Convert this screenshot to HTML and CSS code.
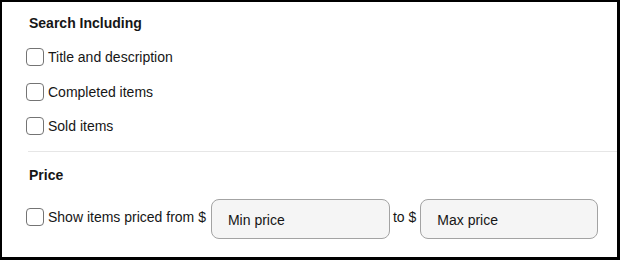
FILE: index.html
```html
<!DOCTYPE html>
<html>
<head>
<meta charset="utf-8">
<link rel="stylesheet" href="styles.css">
</head>
<body>
<div class="frame">
  <section class="group">
    <h3 class="heading">Search Including</h3>
    <label class="row"><input type="checkbox" class="box"><span class="label">Title and description</span></label>
    <label class="row"><input type="checkbox" class="box"><span class="label">Completed items</span></label>
    <label class="row"><input type="checkbox" class="box"><span class="label">Sold items</span></label>
  </section>
  <hr class="divider">
  <section class="group">
    <h3 class="heading heading-price">Price</h3>
    <div class="price-row">
      <label class="price-check"><input type="checkbox" class="box"><span class="label">Show items priced from $</span></label>
      <input type="text" class="field" placeholder="Min price">
      <span class="label to">to $</span>
      <input type="text" class="field field-max" placeholder="Max price">
    </div>
  </section>
</div>
</body>
</html>
```
FILE: styles.css
```css
html, body {
  margin: 0;
  padding: 0;
  background: #fff;
}
.frame {
  width: 620px;
  height: 260px;
  box-sizing: border-box;
  border: 2px solid #000;
  border-right-width: 3px;
  border-bottom-width: 3px;
  padding: 13px 0 0 24px;
  font-family: "Liberation Sans", Arial, sans-serif;
  color: #161616;
  background: #fff;
}
.heading {
  margin: 0 0 0 3px;
  font-size: 14px;
  line-height: 16px;
  font-weight: bold;
}
.group .heading + .row {
  margin-top: 9px;
}
.row {
  display: flex;
  align-items: center;
  height: 34px;
}
.row + .row {
  margin-top: 0.5px;
}
.box {
  appearance: none;
  -webkit-appearance: none;
  margin: 0;
  width: 18px;
  height: 18px;
  box-sizing: border-box;
  border: 1px solid #747474;
  border-radius: 4px;
  background: #fff;
  flex: none;
}
.label {
  font-size: 14px;
  line-height: 16px;
  margin-left: 4px;
  white-space: nowrap;
}
.divider {
  border: 0;
  height: 1px;
  background: #e6e6e6;
  margin: 8px 0 0 2px;
}
.heading-price {
  margin-top: 15px;
}
.price-row {
  display: flex;
  align-items: center;
  margin-top: 16px;
  height: 40px;
}
.price-check {
  display: flex;
  align-items: center;
  margin-bottom: 5px;
}
.label.to {
  margin: 0 0 5px 3px;
}
.field {
  width: 179px;
  height: 40px;
  box-sizing: border-box;
  margin: 0 0 0 5px;
  border: 1px solid #a3a3a3;
  border-radius: 8px;
  background: #f5f5f5;
  padding: 2px 0 0 16px;
  font-family: "Liberation Sans", Arial, sans-serif;
  font-size: 14px;
  color: #161616;
  outline: none;
}
.field-max {
  width: 178px;
  margin-left: 4px;
}
.field::placeholder {
  color: #161616;
  opacity: 1;
}
```
